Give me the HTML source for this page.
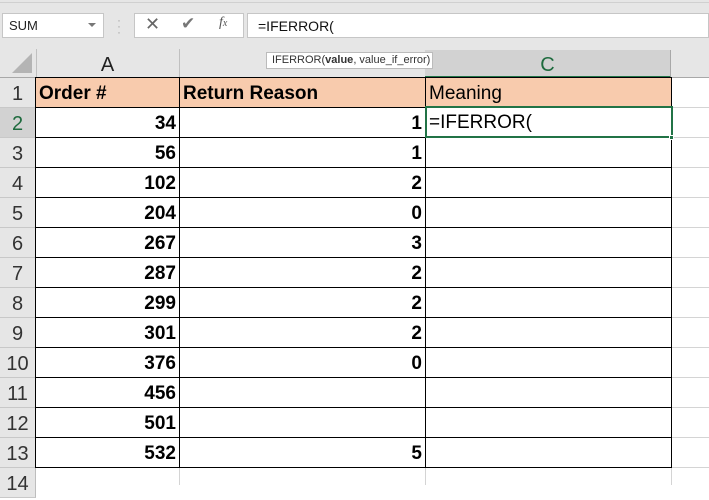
<!DOCTYPE html>
<html><head><style>
*{margin:0;padding:0;box-sizing:border-box}
body{width:709px;height:485px;overflow:hidden;background:#fff;font-family:"Liberation Sans",sans-serif;position:relative}
.a{position:absolute}
.rh{position:absolute;left:0;width:36px;height:30px;background:#e6e6e6;border-bottom:1px solid #c8c8c8;border-right:1px solid #bdbdbd;color:#333;font-size:20px;text-align:center;line-height:32px}
.c{position:absolute;height:31px;border:1px solid #000;font-size:19px;line-height:32px;padding:0 3px;font-weight:bold;overflow:hidden}
.gl{position:absolute;left:671px;width:38px;height:1px;background:#d4d4d4}
</style></head><body>
<div class="a" style="left:0;top:0;width:709px;height:49px;background:#e6e6e6"></div>
<div class="a" style="left:0;top:2px;width:709px;height:1px;background:#d0d0d0"></div>
<div class="a" style="left:2px;top:13px;width:102px;height:25px;background:#fff;border:1px solid #c6c6c6;font-size:13px;line-height:23px;padding-left:6px;color:#222">SUM</div>
<div class="a" style="left:88px;top:23px;width:0;height:0;border-left:4px solid transparent;border-right:4px solid transparent;border-top:4px solid #777"></div>
<div class="a" style="left:117px;top:17px;color:#aaa;font-size:12px;line-height:6px">·<br>·<br>·</div>
<div class="a" style="left:134px;top:13px;width:110px;height:25px;background:#fff;border:1px solid #c6c6c6"></div>
<div class="a" style="left:145px;top:14px;font-size:18px;color:#666">✕</div>
<div class="a" style="left:181px;top:14px;font-size:17px;color:#777">✔</div>
<div class="a" style="left:219px;top:15px;font-size:14px;color:#555;font-style:italic;font-family:'Liberation Serif',serif">f<span style="font-size:10px">x</span></div>
<div class="a" style="left:247px;top:13px;width:462px;height:25px;background:#fff;border:1px solid #c6c6c6;font-size:14px;line-height:24px;padding-left:10px;color:#111">=IFERROR(</div>
<div class="a" style="left:0;top:49px;width:709px;height:29px;background:#e6e6e6;border-bottom:1px solid #a8a8a8"></div>
<div class="a" style="left:12px;top:53px;width:0;height:0;border-left:20px solid transparent;border-bottom:20px solid #b4b4b4"></div>
<div class="a" style="left:36px;top:49px;width:1px;height:29px;background:#c0c0c0"></div>
<div class="a" style="left:36px;top:54px;width:143px;text-align:center;font-size:20px;color:#222">A</div>
<div class="a" style="left:179px;top:49px;width:1px;height:29px;background:#c0c0c0"></div>
<div class="a" style="left:425px;top:50px;width:246px;height:28px;background:#d2d2d2;border-bottom:2px solid #217346;border-right:1px solid #a8a8a8;text-align:center;font-size:20px;color:#1e6b3e;line-height:30px">C</div>
<div class="a" style="left:266px;top:52px;width:167px;height:17px;background:#fff;border:1px solid #bbb;font-size:11px;line-height:15px;padding-left:5px;color:#333;white-space:nowrap;overflow:hidden">IFERROR(<b>value</b>, value_if_error)</div>

<div class="rh" style="top:78px">1</div><div class="rh" style="top:108px;color:#1e6b3e;background:#d2d2d2">2</div>
<div class="rh" style="top:138px">3</div><div class="rh" style="top:168px">4</div><div class="rh" style="top:198px">5</div>
<div class="rh" style="top:228px">6</div><div class="rh" style="top:258px">7</div><div class="rh" style="top:288px">8</div>
<div class="rh" style="top:318px">9</div><div class="rh" style="top:348px">10</div><div class="rh" style="top:378px">11</div>
<div class="rh" style="top:408px">12</div><div class="rh" style="top:438px">13</div><div class="rh" style="top:468px">14</div>

<div class="gl" style="top:107px"></div><div class="gl" style="top:137px"></div><div class="gl" style="top:167px"></div>
<div class="gl" style="top:197px"></div><div class="gl" style="top:227px"></div><div class="gl" style="top:257px"></div>
<div class="gl" style="top:287px"></div><div class="gl" style="top:317px"></div><div class="gl" style="top:347px"></div>
<div class="gl" style="top:377px"></div><div class="gl" style="top:407px"></div><div class="gl" style="top:437px"></div>
<div class="gl" style="top:467px"></div>
<div class="a" style="left:179px;top:468px;width:1px;height:17px;background:#d4d4d4"></div>
<div class="a" style="left:425px;top:468px;width:1px;height:17px;background:#d4d4d4"></div>
<div class="a" style="left:671px;top:468px;width:1px;height:17px;background:#d4d4d4"></div>

<div class="c" style="left:35px;top:77px;width:145px;background:#f8cbad">Order #</div>
<div class="c" style="left:179px;top:77px;width:247px;background:#f8cbad">Return Reason</div>
<div class="c" style="left:425px;top:77px;width:247px;background:#f8cbad;font-weight:normal">Meaning</div>

<div style="position:absolute;left:0;top:0">
<div class="c" style="left:35px;top:107px;width:145px;text-align:right">34</div><div class="c" style="left:179px;top:107px;width:247px;text-align:right">1</div><div class="c" style="left:425px;top:107px;width:247px"></div>
<div class="c" style="left:35px;top:137px;width:145px;text-align:right">56</div><div class="c" style="left:179px;top:137px;width:247px;text-align:right">1</div><div class="c" style="left:425px;top:137px;width:247px"></div>
<div class="c" style="left:35px;top:167px;width:145px;text-align:right">102</div><div class="c" style="left:179px;top:167px;width:247px;text-align:right">2</div><div class="c" style="left:425px;top:167px;width:247px"></div>
<div class="c" style="left:35px;top:197px;width:145px;text-align:right">204</div><div class="c" style="left:179px;top:197px;width:247px;text-align:right">0</div><div class="c" style="left:425px;top:197px;width:247px"></div>
<div class="c" style="left:35px;top:227px;width:145px;text-align:right">267</div><div class="c" style="left:179px;top:227px;width:247px;text-align:right">3</div><div class="c" style="left:425px;top:227px;width:247px"></div>
<div class="c" style="left:35px;top:257px;width:145px;text-align:right">287</div><div class="c" style="left:179px;top:257px;width:247px;text-align:right">2</div><div class="c" style="left:425px;top:257px;width:247px"></div>
<div class="c" style="left:35px;top:287px;width:145px;text-align:right">299</div><div class="c" style="left:179px;top:287px;width:247px;text-align:right">2</div><div class="c" style="left:425px;top:287px;width:247px"></div>
<div class="c" style="left:35px;top:317px;width:145px;text-align:right">301</div><div class="c" style="left:179px;top:317px;width:247px;text-align:right">2</div><div class="c" style="left:425px;top:317px;width:247px"></div>
<div class="c" style="left:35px;top:347px;width:145px;text-align:right">376</div><div class="c" style="left:179px;top:347px;width:247px;text-align:right">0</div><div class="c" style="left:425px;top:347px;width:247px"></div>
<div class="c" style="left:35px;top:377px;width:145px;text-align:right">456</div><div class="c" style="left:179px;top:377px;width:247px;text-align:right"></div><div class="c" style="left:425px;top:377px;width:247px"></div>
<div class="c" style="left:35px;top:407px;width:145px;text-align:right">501</div><div class="c" style="left:179px;top:407px;width:247px;text-align:right"></div><div class="c" style="left:425px;top:407px;width:247px"></div>
<div class="c" style="left:35px;top:437px;width:145px;text-align:right">532</div><div class="c" style="left:179px;top:437px;width:247px;text-align:right">5</div><div class="c" style="left:425px;top:437px;width:247px"></div>
</div>
<div class="a" style="left:425px;top:106px;width:248px;height:32px;border:2px solid #217346;background:#fff;font-size:19px;line-height:30px;padding-left:2px;color:#000">=IFERROR(</div>
<div class="a" style="left:669px;top:135px;width:5px;height:5px;background:#217346;border:1px solid #fff"></div>
</body></html>
